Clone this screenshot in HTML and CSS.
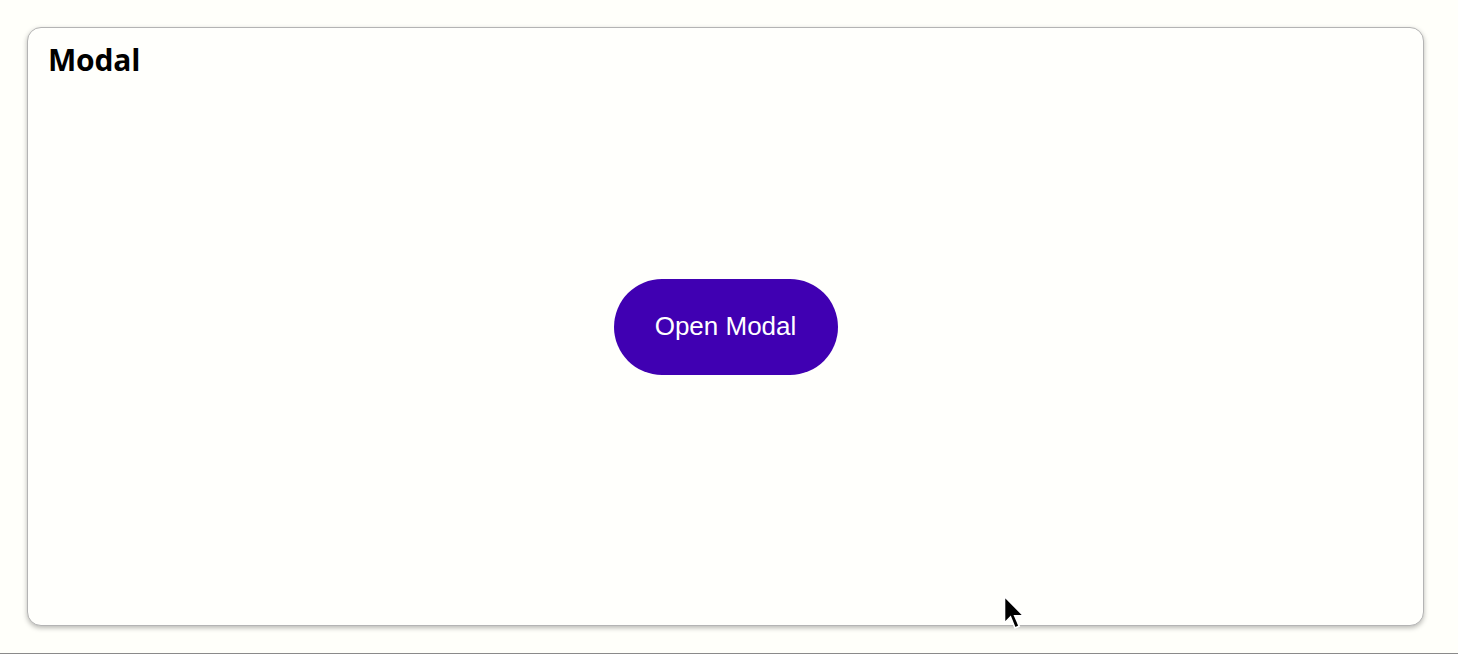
FILE: index.html
```html
<!DOCTYPE html>
<html lang="en">
<head>
<meta charset="utf-8">
<title>Modal</title>
<link rel="stylesheet" href="styles.css">
</head>
<body>
<div class="page">
  <section class="card">
    <h1 class="title">Modal</h1>
    <div class="stage">
      <button class="open-btn" type="button">Open Modal</button>
    </div>
  </section>
  <svg class="cursor" width="26" height="38" viewBox="0 0 26 38" aria-hidden="true">
    <path d="M1.5 1.5 L1.5 28 L7.5 22 L12 33 L16.2 31.1 L11.7 20.8 L20.5 20.8 Z" fill="#000" stroke="#fff" stroke-width="1.6" stroke-linejoin="miter"/>
  </svg>
</div>
</body>
</html>
```
FILE: styles.css
```css
* { box-sizing: border-box; }
html, body { margin: 0; padding: 0; }
body {
  background: #fffffa;
  font-family: "Open Sans", "Liberation Sans", sans-serif;
}
.page {
  position: relative;
  height: 654px;
  padding: 27px 34px 0 27px;
  border-bottom: 1px solid #8a8a8a;
}
.card {
  height: 599px;
  background: #fffffc;
  border: 1px solid #b4b4b4;
  border-radius: 14px;
  box-shadow: 0 2px 5px rgba(0,0,0,0.28);
  display: flex;
  flex-direction: column;
  position: relative;
}
.title {
  position: absolute;
  left: 20px;
  top: 12px;
  margin: 0;
  font-size: 30px;
  font-weight: 700;
  letter-spacing: -0.2px;
  color: #000;
  line-height: 40px;
}
.stage {
  flex: 1;
  display: flex;
  align-items: center;
  justify-content: center;
}
.open-btn {
  width: 224px;
  height: 96px;
  border: none;
  border-radius: 48px;
  background: #4000b2;
  color: #fff;
  font-family: "Liberation Sans", Arial, sans-serif;
  font-size: 26px;
  padding: 0;
  cursor: pointer;
}
.cursor {
  position: absolute;
  left: 1003px;
  top: 595px;
}
```
